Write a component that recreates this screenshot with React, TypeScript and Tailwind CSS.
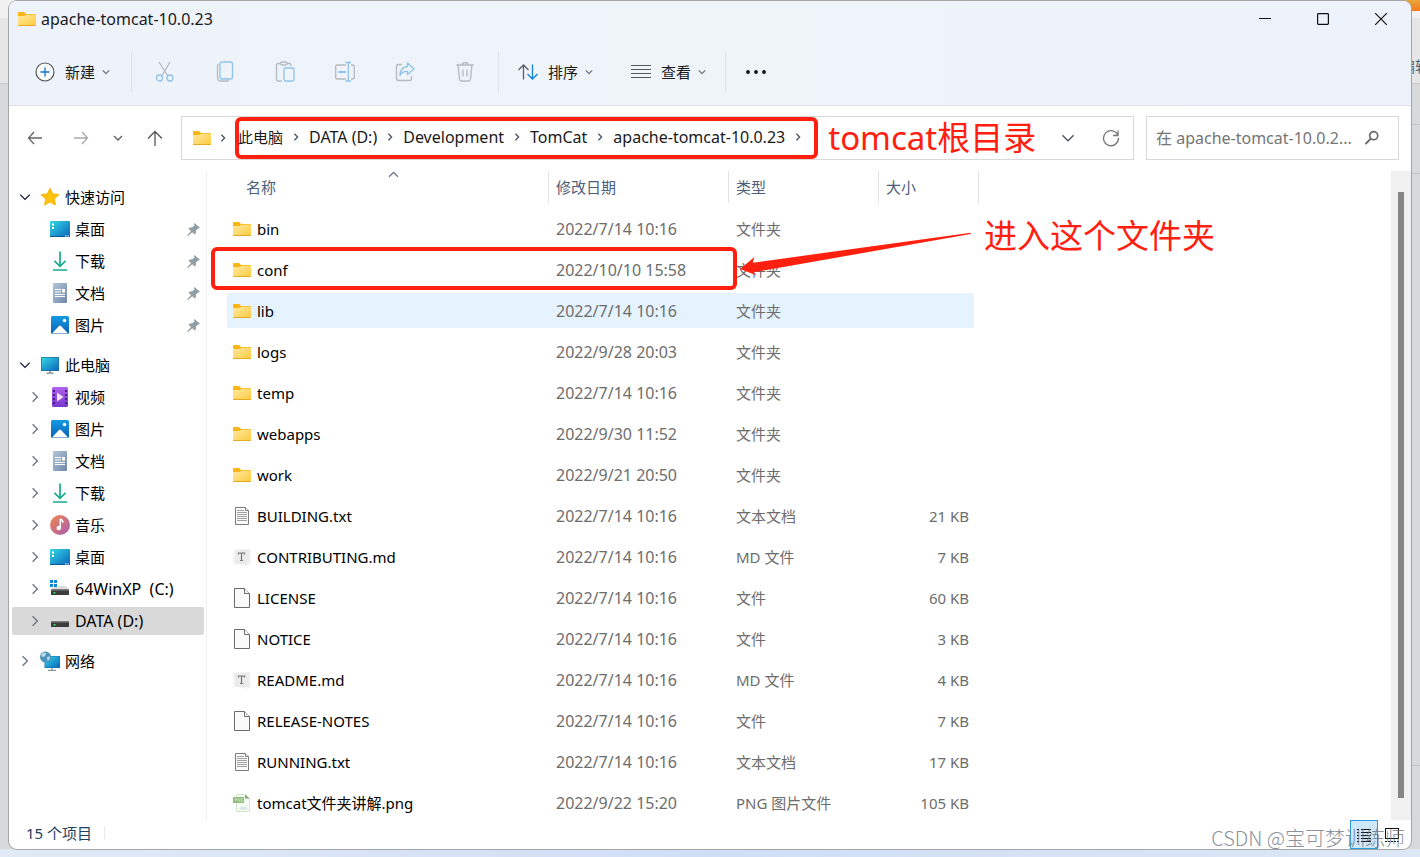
import React from "react";

type IconProps = { className?: string };

/* ---------- ICONS ---------- */

const FolderIcon = ({ className = "" }: IconProps) => (
  <svg width="18" height="14" viewBox="0 0 18 14" className={"shrink-0 " + className}>
    <defs>
      <linearGradient id="folder" x1="0" y1="0" x2="1" y2="1">
        <stop offset="0" stopColor="#ffe9a2" />
        <stop offset="1" stopColor="#ffca3d" />
      </linearGradient>
    </defs>
    <path d="M0 1Q0 0 1 0H5.5Q6.300 0 6.800 .6L8 2H17Q18 2 18 3V8H0Z" fill="#f9b516" />
    <path d="M0 4H6.500L8.300 2.700H18V13Q18 14 17 14H1Q0 14 0 13Z" fill="url(#folder)" />
    <path d="M0 13H18Q18 14 17 14H1Q0 14 0 13Z" fill="#e8a923" />
  </svg>
);

const Chevron = ({ dir, size = 8, className = "" }: { dir: "right" | "down" | "up"; size?: number; className?: string }) => {
  const d = {
    right: "M3 1L7 5L3 9",
    down: "M1 3L5 7L9 3",
    up: "M1 7L5 3L9 7",
  }[dir];
  return (
    <svg width={size} height={size} viewBox="0 0 10 10" fill="none" stroke="currentColor" className={"shrink-0 " + className}>
      <path d={d} strokeWidth={13 / size} />
    </svg>
  );
};

const DesktopIcon = () => (
  <svg width="20" height="16" viewBox="0 0 20 16">
    <defs>
      <linearGradient id="desk" x1="0" y1="0" x2="1" y2="1">
        <stop offset="0" stopColor="#35d6e3" />
        <stop offset="1" stopColor="#0a66bd" />
      </linearGradient>
    </defs>
    <rect width="20" height="16" rx="1" fill="url(#desk)" />
    <rect y="15" width="20" height="1" fill="#0c5a94" />
    <path d="M2 2.500h2v2h-2zM2 6h2v2h-2z" fill="#fff" />
    <path d="M15 15h1.500M17.500 15h1.500" stroke="#fff" />
  </svg>
);

const DownloadIcon = () => (
  <svg width="16" height="20" viewBox="0 0 16 20" fill="none" stroke="#17ab8e" strokeWidth="1.700">
    <path d="M8 0.500V15M2.500 9.800L8 15.300L13.500 9.800M1 19H15" />
  </svg>
);

const DocumentIcon = () => (
  <svg width="14" height="20" viewBox="0 0 14 20">
    <defs>
      <linearGradient id="doc" x1="0" y1="0" x2="1" y2="1">
        <stop offset="0" stopColor="#b3c6d9" />
        <stop offset="1" stopColor="#6e8aa8" />
      </linearGradient>
    </defs>
    <rect width="14" height="20" rx="1" fill="url(#doc)" />
    <path d="M2 6.500h6M2 9h6M2 11.500h10M2 13.500h10" stroke="#fff" />
    <rect x="9" y="6" width="3" height="3.500" fill="#fff" />
  </svg>
);

const PictureIcon = () => (
  <svg width="18" height="18" viewBox="0 0 18 18">
    <defs>
      <linearGradient id="pic" x1="0" y1="0" x2="0" y2="1">
        <stop offset="0" stopColor="#149be6" />
        <stop offset="1" stopColor="#0d62b4" />
      </linearGradient>
    </defs>
    <rect width="18" height="18" rx="1.500" fill="url(#pic)" />
    <path d="M1 17.500L8 10Q9 9 10 10L17 17.500Z" fill="#fff" />
    <circle cx="13.500" cy="4.500" r="1.700" fill="#fff" />
  </svg>
);

const VideoIcon = () => (
  <svg width="16" height="20" viewBox="0 0 16 20">
    <defs>
      <linearGradient id="vid" x1="0" y1="0" x2="0" y2="1">
        <stop offset="0" stopColor="#b060ee" />
        <stop offset="1" stopColor="#7a38cf" />
      </linearGradient>
    </defs>
    <rect width="16" height="20" rx="1.500" fill="url(#vid)" />
    <path d="M2 3V19M14 3V19" stroke="#3b1a78" strokeWidth="1.800" strokeDasharray="2 2" />
    <path d="M5 5.500V14.500L11.500 10Z" fill="#f0e4fb" />
  </svg>
);

const MusicIcon = () => (
  <svg width="20" height="20" viewBox="0 0 20 20">
    <defs>
      <linearGradient id="mus" x1="0" y1="0" x2="1" y2="1">
        <stop offset="0" stopColor="#f1894b" />
        <stop offset="1" stopColor="#a85ab5" />
      </linearGradient>
    </defs>
    <circle cx="10" cy="10" r="10" fill="url(#mus)" />
    <circle cx="8.800" cy="13" r="2.300" fill="#fff" />
    <path d="M10.300 13V4.500H11.500L13.300 7.500" fill="none" stroke="#fff" strokeWidth="1.500" />
  </svg>
);

const MonitorIcon = () => (
  <svg width="18" height="17" viewBox="0 0 18 17">
    <rect width="18" height="14" rx="0.500" fill="#1b6f9c" />
    <rect x="0.700" y="0.700" width="16.600" height="12.600" fill="url(#desk)" />
    <path d="M9 14V16M5.500 16.200H12.500" stroke="#7c8790" strokeWidth="1.300" />
  </svg>
);

const DriveIcon = ({ system = false }: { system?: boolean }) => (
  <svg width="20" height="18" viewBox="0 0 20 18">
    <path d="M4 6H16L19 10H1Z" fill="#dcdcde" />
    <rect x="1" y="9.500" width="18" height="5.500" rx="0.500" fill="#3c3c3c" />
    <rect x="1" y="9.500" width="18" height="1.200" fill="#6a6a6a" />
    <rect x="3.500" y="12" width="2" height="1.500" fill="#39e05b" />
    {system && (
      <>
        <rect width="8" height="7" fill="#fff" />
        <path d="M0 0h3v3h-3zM4 0h3v3h-3zM0 4h3v3h-3zM4 4h3v3h-3z" fill="#0c86d8" />
      </>
    )}
  </svg>
);

const NetworkIcon = () => (
  <svg width="20" height="20" viewBox="0 0 20 20">
    <rect x="4.500" y="5" width="15.500" height="12" fill="#1873ab" />
    <rect x="5" y="5.500" width="14.500" height="11" fill="url(#desk)" />
    <path d="M12 17V19M8 19.300H16" stroke="#8a949b" strokeWidth="1.200" />
    <circle cx="5.500" cy="6" r="5.500" fill="#4f93bd" />
    <path d="M1.500 3Q4 .5 6 2Q6 5 3 6Q1 6 1.500 3ZM7 6L10 5.500Q10 9 7.500 10Z" fill="#b9dcec" />
  </svg>
);

const StarIcon = () => (
  <svg width="20" height="20" viewBox="0 0 20 20">
    <path
      d="M10 1.500L12.500 7L18.500 7.700L14 11.700L15.300 17.700L10 14.700L4.700 17.700L6 11.700L1.500 7.700L7.500 7Z"
      fill="#fdc30c"
      stroke="#fdb90a"
      strokeWidth="1.300"
      strokeLinejoin="round"
    />
  </svg>
);

const PinIcon = () => (
  <svg width="13" height="13" viewBox="0 0 13 13" fill="#939ea6">
    <path d="M7.500 0L13 4.800L11.800 5.600L10.800 5.500L9 7.800L8.800 10.500L7.700 11.500L5.200 9.200L1 13L0 12.500L4 8L1.500 5.800L2.600 4.600L5.300 4.300L7.500 2.300L7 1Z" />
  </svg>
);

const BlankFileIcon = () => (
  <svg width="18" height="20" viewBox="0 0 18 20" fill="#fafafa" stroke="#6b6b6b">
    <path d="M1.500 0.500H11.500L16.500 5.500V19.500H1.500Z" />
    <path d="M11.500 0.500V5.500H16.500" />
  </svg>
);

const TextFileIcon = () => (
  <svg width="18" height="18" viewBox="0 0 18 18" fill="#fafafa" stroke="#7c7c7c">
    <path d="M2.500 0.500H12.500L15.500 3.500V17.500H2.500Z" />
    <path d="M12.500 0.500V3.500H15.500" />
    <path d="M4 3.500H11M4 5.500H14M4 7.500H14M4 9.500H14M4 11.500H14M4 13.500H14" stroke="#a0a0a0" />
  </svg>
);

const MarkdownIcon = () => (
  <svg width="18" height="18" viewBox="0 0 18 18">
    <path d="M1 2L17 1L17.500 15L14 17.500L0.500 15Z" fill="#f6f6f6" stroke="#ececec" strokeWidth="0.500" />
    <rect x="2" y="2" width="14" height="14" fill="#ebebeb" />
    <path d="M5.500 6.500V5H11.500V6.500M8.500 5V12.500M7 12.500H10" fill="none" stroke="#767676" strokeWidth="1.200" />
  </svg>
);

const PngIcon = () => (
  <svg width="18" height="18" viewBox="0 0 18 18">
    <path d="M3.500 0.500H12L16.500 4.500V17.500H3.500Z" fill="#f6fbf4" stroke="#d5e6cd" />
    <path d="M12 0.500V4.500H16.500Z" fill="#79ab68" />
    <path d="M6 15.500L9 11.500L11 13.500L12.500 12L15 15.500Z" fill="#d3e8ee" />
    <rect x="0" y="3" width="11" height="6" fill="#8fbd7f" />
    <path d="M2 7.500V4.500H3.500V6H2M5 7.500V4.500L7 7.500V4.500M10 4.500H8.500V7.500H10V6" fill="none" stroke="#d9ecd2" strokeWidth="0.600" />
  </svg>
);

/* ---------- DATA ---------- */

const quickAccess = [
  { name: "桌面", icon: <DesktopIcon /> },
  { name: "下载", icon: <DownloadIcon /> },
  { name: "文档", icon: <DocumentIcon /> },
  { name: "图片", icon: <PictureIcon /> },
];

const thisPc = [
  { name: "视频", icon: <VideoIcon /> },
  { name: "图片", icon: <PictureIcon /> },
  { name: "文档", icon: <DocumentIcon /> },
  { name: "下载", icon: <DownloadIcon /> },
  { name: "音乐", icon: <MusicIcon /> },
  { name: "桌面", icon: <DesktopIcon /> },
  { name: "64WinXP  (C:)", icon: <DriveIcon system />, drive: true },
  { name: "DATA (D:)", icon: <DriveIcon />, drive: true, selected: true },
];

const crumbs = ["DATA (D:)", "Development", "TomCat", "apache-tomcat-10.0.23"];

const files = [
  { name: "bin", date: "2022/7/14 10:16", type: "文件夹", size: "", icon: <FolderIcon /> },
  { name: "conf", date: "2022/10/10 15:58", type: "文件夹", size: "", icon: <FolderIcon />, marked: true },
  { name: "lib", date: "2022/7/14 10:16", type: "文件夹", size: "", icon: <FolderIcon />, hovered: true },
  { name: "logs", date: "2022/9/28 20:03", type: "文件夹", size: "", icon: <FolderIcon /> },
  { name: "temp", date: "2022/7/14 10:16", type: "文件夹", size: "", icon: <FolderIcon /> },
  { name: "webapps", date: "2022/9/30 11:52", type: "文件夹", size: "", icon: <FolderIcon /> },
  { name: "work", date: "2022/9/21 20:50", type: "文件夹", size: "", icon: <FolderIcon /> },
  { name: "BUILDING.txt", date: "2022/7/14 10:16", type: "文本文档", size: "21 KB", icon: <TextFileIcon /> },
  { name: "CONTRIBUTING.md", date: "2022/7/14 10:16", type: "MD 文件", size: "7 KB", icon: <MarkdownIcon /> },
  { name: "LICENSE", date: "2022/7/14 10:16", type: "文件", size: "60 KB", icon: <BlankFileIcon /> },
  { name: "NOTICE", date: "2022/7/14 10:16", type: "文件", size: "3 KB", icon: <BlankFileIcon /> },
  { name: "README.md", date: "2022/7/14 10:16", type: "MD 文件", size: "4 KB", icon: <MarkdownIcon /> },
  { name: "RELEASE-NOTES", date: "2022/7/14 10:16", type: "文件", size: "7 KB", icon: <BlankFileIcon /> },
  { name: "RUNNING.txt", date: "2022/7/14 10:16", type: "文本文档", size: "17 KB", icon: <TextFileIcon /> },
  { name: "tomcat文件夹讲解.png", date: "2022/9/22 15:20", type: "PNG 图片文件", size: "105 KB", icon: <PngIcon /> },
];

const actions = [
  {
    label: "剪切",
    icon: (
      <>
        <path d="M4 1L12.500 14.500M15 1L7 14.500" stroke="#b5babf" />
        <circle cx="4.500" cy="17" r="3" stroke="#8fc3ea" />
        <circle cx="15" cy="17" r="3" stroke="#8fc3ea" />
      </>
    ),
  },
  {
    label: "复制",
    icon: (
      <>
        <path d="M3.500 3Q2.500 3.500 2.500 5V16Q2.500 20 6 20H12Q13.500 20 14 19" stroke="#b5babf" />
        <rect x="5" y="1" width="12.500" height="17" rx="2" stroke="#8fc3ea" />
      </>
    ),
  },
  {
    label: "粘贴",
    icon: (
      <>
        <path d="M7 20H3Q1.500 20 1.500 18.500V4Q1.500 2.500 3 2.500H5.500M12 2.500H14.500Q16 2.500 16 4V5" stroke="#b5babf" />
        <rect x="5.500" y="1" width="6.500" height="3" rx="1.500" stroke="#b5babf" />
        <rect x="9" y="7" width="10" height="13" rx="1.500" stroke="#8fc3ea" />
      </>
    ),
  },
  {
    label: "重命名",
    icon: (
      <>
        <path d="M11 4H2.500Q.7 4 .7 6V16Q.7 18 2.500 18H11M16 4H17.500Q19.300 4 19.300 6V16Q19.300 18 17.500 18H16" stroke="#b5babf" />
        <path d="M10.500 1.500H16M13.300 1.500V20M10.500 20H16" stroke="#8fc3ea" />
        <path d="M3.500 11H11" stroke="#8fc3ea" strokeWidth="2" />
      </>
    ),
  },
  {
    label: "共享",
    icon: (
      <>
        <path d="M7 3.500H3.500Q1.500 3.500 1.500 5.500V17.500Q1.500 19.500 3.500 19.500H14.500Q16.500 19.500 16.500 17.500V15" stroke="#b5babf" />
        <path d="M12.500 2L19 8L12.500 13.500V10.500Q7.500 10 5 14.500Q5 6.500 12.500 5.500Z" stroke="#8fc3ea" strokeLinejoin="round" />
      </>
    ),
  },
  {
    label: "删除",
    icon: (
      <>
        <path d="M1.500 4H18.500M7 4Q7 1.500 10 1.500Q13 1.500 13 4M3 4L4.500 18Q4.700 20 6.500 20H13.500Q15.300 20 15.500 18L17 4M8 8.500V15.500M12 8.500V15.500" stroke="#b5babf" />
      </>
    ),
  },
];

/* ---------- PARTS ---------- */

const Divider = () => <span className="h-10 w-px bg-[#dde2e6]"></span>;

const MenuButton = ({ label, children }: { label: string; children: React.ReactNode }) => (
  <button className="flex items-center px-[19px] h-10 text-[#1b1b1b]">
    {children}
    <span className="ml-[10px] mr-[7px]">{label}</span>
    <Chevron dir="down" className="text-gray-500" />
  </button>
);

const Header = () => (
  <header className="border-b border-[#d9dfe5] bg-linear-to-r from-[#eef3fb] via-[#eef4f8] to-[#eef2fb]">
    <div className="flex items-center h-[37px] pb-[2px] pl-[9px]">
      <FolderIcon />
      <h1 className="ml-[5px] flex-1 text-base leading-5 text-[#1a1a1a]">apache-tomcat-10.0.23</h1>
      <button aria-label="最小化" className="flex justify-center w-[58px]">
        <svg width="12" height="12" viewBox="0 0 12 12" stroke="#111"><path d="M0 5.500H12" /></svg>
      </button>
      <button aria-label="最大化" className="flex justify-center w-[58px]">
        <svg width="12" height="12" viewBox="0 0 12 12" stroke="#111" fill="none" strokeWidth="1.200"><rect x="0.600" y="0.600" width="10.800" height="10.800" rx="0.800" /></svg>
      </button>
      <button aria-label="关闭" className="flex justify-center w-[58px] mr-px">
        <svg width="12" height="12" viewBox="0 0 12 12" stroke="#111" strokeWidth="1.200"><path d="M0 0L12 12M12 0L0 12" /></svg>
      </button>
    </div>

    <div className="flex items-center h-[67px] pl-[7px]">
      <div className="mr-[2px]">
        <MenuButton label="新建">
          <svg width="20" height="20" viewBox="0 0 20 20" fill="none">
            <circle cx="10" cy="10" r="9" stroke="#555" strokeWidth="1.200" fill="#f8fafc" />
            <path d="M10 5.500V14.500M5.500 10H14.500" stroke="#1176c4" strokeWidth="1.300" />
          </svg>
        </MenuButton>
      </div>
      <Divider />
      <div className="flex px-[3px]">
        {actions.map((action) => (
          <button key={action.label} aria-label={action.label} className="flex justify-center w-[60px]">
            <svg width="20" height="21" viewBox="0 0 20 21" fill="none" strokeWidth="1.300">{action.icon}</svg>
          </button>
        ))}
      </div>
      <Divider />
      <MenuButton label="排序">
        <svg width="20" height="16" viewBox="0 0 20 16" fill="none" strokeWidth="1.300">
          <path d="M5.500 15.500V1M0.500 6L5.500 1L10.500 6" stroke="#5b5f63" />
          <path d="M14.500 0.500V15M9.500 10L14.500 15L19.500 10" stroke="#1180dc" />
        </svg>
      </MenuButton>
      <MenuButton label="查看">
        <svg width="20" height="14" viewBox="0 0 20 14" stroke="#55595d">
          <path d="M0 0.500H20M0 4.500H20M0 8.500H20M0 12.500H20" />
        </svg>
      </MenuButton>
      <Divider />
      <button aria-label="更多" className="px-5">
        <svg width="20" height="4" viewBox="0 0 20 4" fill="#111">
          <circle cx="2" cy="2" r="1.900" /><circle cx="10" cy="2" r="1.900" /><circle cx="18" cy="2" r="1.900" />
        </svg>
      </button>
    </div>
  </header>
);

const CrumbArrow = () => (
  <span className="flex justify-center w-[26px] text-gray-600"><Chevron dir="right" /></span>
);

const AddressBar = () => (
  <div className="flex items-center pt-[10px] pb-[11px] pr-3 pl-[18px]">
    <div className="flex items-center mr-[18px] text-[#5c5c5c]">
      <button aria-label="后退" className="w-4">
        <svg width="16" height="14" viewBox="0 0 16 14" fill="none" stroke="#666" strokeWidth="1.300"><path d="M15 7H1.500M7 1L1.500 7L7 13" /></svg>
      </button>
      <button aria-label="前进" className="ml-[30px] w-4">
        <svg width="16" height="14" viewBox="0 0 16 14" fill="none" stroke="#aaa" strokeWidth="1.300"><path d="M1 7H14.500M9 1L14.500 7L9 13" /></svg>
      </button>
      <button aria-label="最近位置" className="ml-6 w-[10px]"><Chevron dir="down" size={10} /></button>
      <button aria-label="上移" className="ml-6 w-4">
        <svg width="16" height="16" viewBox="0 0 16 16" fill="none" stroke="#555" strokeWidth="1.300"><path d="M8 16V1.500M1 8.500L8 1.500L15 8.500" /></svg>
      </button>
    </div>

    <div className="flex flex-1 items-center h-11 border border-[#d9d9d9] pl-[11px]">
      <FolderIcon />
      <Chevron dir="right" className="ml-2 mr-[11px] text-gray-600" />
      <nav className="relative flex items-center h-full pb-[2px] text-[#1a1a1a]">
        <button className="whitespace-nowrap">此电脑</button>
        <CrumbArrow />
        {crumbs.map((crumb) => (
          <React.Fragment key={crumb}>
            <button className="whitespace-nowrap text-base leading-5">{crumb}</button>
            <CrumbArrow />
          </React.Fragment>
        ))}
        <span className="absolute top-0 bottom-0 -left-[3px] -right-[7px] border-4 border-[#ff2010] rounded-md"></span>
      </nav>
      <span className="ml-[17px] flex-1 whitespace-nowrap text-[33px] leading-10 text-[#ff2010]">tomcat根目录</span>
      <button aria-label="展开" className="text-gray-600"><Chevron dir="down" size={14} /></button>
      <button aria-label="刷新" className="ml-[27px] mr-[13px]">
        <svg width="18" height="18" viewBox="0 0 18 18" fill="none" stroke="#777" strokeWidth="1.300">
          <path d="M16 6.500A7.500 7.500 0 1 0 16.500 9M16 1.500V6.500H11" />
        </svg>
      </button>
    </div>

    <label className="flex items-center ml-3 w-[253px] h-11 border border-[#d9d9d9] pl-[9px] pr-[18px]">
      <input
        type="text"
        aria-label="搜索"
        placeholder="在 apache-tomcat-10.0.2..."
        className="min-w-0 flex-1 text-base leading-5 outline-none placeholder:text-[#757575]"
      />
      <svg width="16" height="16" viewBox="0 0 16 16" fill="none" stroke="#6b6b6b" className="ml-2">
        <circle cx="9.700" cy="5.700" r="4" strokeWidth="1.700" />
        <path d="M6.800 8.600L1.500 14" strokeWidth="2" />
      </svg>
    </label>
  </div>
);

type NavRowProps = {
  name: string;
  icon: React.ReactNode;
  nested?: boolean;
  arrow?: "right" | "down";
  pinned?: boolean;
  drive?: boolean;
  selected?: boolean;
};

const NavRow = ({ name, icon, nested, arrow, pinned, drive, selected }: NavRowProps) => (
  <button
    className={
      "flex items-center w-full h-7 pr-1 rounded-xs text-black whitespace-pre " +
      (nested ? "pl-[13px] " : "pl-[3px] ") +
      (drive ? "text-base leading-5 " : "") +
      (selected ? "bg-[#d9d9d9]" : "")
    }
  >
    <span className="flex justify-center w-5">
      {arrow && <Chevron dir={arrow} size={12} className={arrow === "down" ? "text-gray-900" : "text-gray-500"} />}
    </span>
    <span className="flex justify-center items-center w-5 mx-[5px]">{icon}</span>
    <span className="flex-1 text-left">{name}</span>
    {pinned && <PinIcon />}
  </button>
);

const Sidebar = () => (
  <aside className="flex flex-col w-[198px] shrink-0 gap-1 pt-3 pl-[3px] pr-[2px] border-r border-[#f0f0f0]">
    <NavRow name="快速访问" icon={<StarIcon />} arrow="down" />
    {quickAccess.map((item) => (
      <NavRow key={item.name} nested pinned {...item} />
    ))}
    <div className="mt-2">
      <NavRow name="此电脑" icon={<MonitorIcon />} arrow="down" />
    </div>
    {thisPc.map((item) => (
      <NavRow key={item.name} nested arrow="right" {...item} />
    ))}
    <div className="mt-2">
      <NavRow name="网络" icon={<NetworkIcon />} arrow="right" />
    </div>
  </aside>
);

const FileTable = () => (
  <div className="relative -my-[6px] ml-5 w-[752px]">
    <table className="w-full table-fixed border-separate border-spacing-x-0 border-spacing-y-[6px] text-left">
      <colgroup>
        <col className="w-[322px]" />
        <col className="w-[180px]" />
        <col className="w-[150px]" />
        <col className="w-[95px]" />
        <col className="w-[5px]" />
      </colgroup>
      <thead className="text-[#4c607a]">
        <tr>
          <th className="p-0 h-[34px] align-top font-normal">
            <button className="relative flex items-center w-full h-8 pl-[19px] border-r border-[#e2e2e2]">
              名称
              <Chevron dir="up" size={11} className="absolute -top-[2px] left-[161px] text-gray-500" />
            </button>
          </th>
          <th className="p-0 align-top font-normal">
            <button className="flex items-center w-full h-8 pl-[7px] border-r border-[#e2e2e2]">修改日期</button>
          </th>
          <th className="p-0 align-top font-normal">
            <button className="flex items-center w-full h-8 pl-[7px] border-r border-[#e2e2e2]">类型</button>
          </th>
          <th className="p-0 align-top font-normal">
            <button className="flex items-center w-full h-8 pl-[7px]">大小</button>
          </th>
          <th className="p-0 align-top"><div className="h-8 border-r border-[#e2e2e2]"></div></th>
        </tr>
      </thead>
      <tbody className="text-[#6d6d6d]">
        {files.map((file) => {
          const bg = file.hovered ? "bg-[#e5f3ff] " : "";
          return (
            <tr key={file.name}>
              <td className={bg + "relative p-0 pl-[6px] h-[35px] rounded-l-xs"}>
                <div className="flex items-center gap-[6px] text-black">
                  <span className="flex w-[18px] h-5 items-center">{file.icon}</span>
                  <span className="whitespace-nowrap">{file.name}</span>
                </div>
                {file.marked && (
                  <span className="absolute -top-[5px] -left-4 w-[526px] h-[43px] border-4 border-[#ff2010] rounded-md"></span>
                )}
              </td>
              <td className={bg + "p-0 pl-[7px] text-base leading-5 whitespace-nowrap"}>{file.date}</td>
              <td className={bg + "p-0 pl-[7px] whitespace-nowrap"}>{file.type}</td>
              <td className={bg + "p-0 pr-[5px] text-right whitespace-nowrap rounded-r-xs"}>{file.size}</td>
              <td className="p-0"></td>
            </tr>
          );
        })}
      </tbody>
    </table>

    {/* hint arrow and note next to the conf folder */}
    <svg width="234" height="46" viewBox="738 232 234 46" className="absolute top-[67px] left-[511px]">
      <path d="M740 269L754.500 257L752.700 262.700L970.700 232.700V234L753.300 272.300L757 275.500Z" fill="#ff2010" />
    </svg>
    <p className="absolute top-[51px] left-[757px] whitespace-nowrap text-[33px] leading-10 text-[#ff2010]">
      进入这个文件夹
    </p>
  </div>
);

const StatusBar = () => (
  <footer className="flex items-stretch h-[29px] pl-[17px] pr-[5px] text-[#24405f]">
    <span className="self-center mb-1">15 个项目</span>
    <span className="self-center mb-1 ml-3 w-px h-3 bg-gray-200"></span>
    <span className="flex-1"></span>
    <button aria-label="详细信息" className="flex items-center justify-center w-7 border border-[#2a9ad8] bg-[#cce8f9]">
      <svg width="14" height="14" viewBox="0 0 14 14" stroke="#111">
        <path d="M0 1.500H2M4 1.500H14M0 4.500H2M4 4.500H14M0 7.500H2M4 7.500H14M0 10.500H2M4 10.500H14M0 13.500H2M4 13.500H14" />
      </svg>
    </button>
    <button aria-label="大图标" className="flex items-center justify-center w-7">
      <svg width="14" height="14" viewBox="0 0 14 14" stroke="#111" fill="none">
        <rect x="0.500" y="0.500" width="13" height="10" /><path d="M0 13.500H14" strokeDasharray="2 1" />
      </svg>
    </button>
  </footer>
);

/* slices of the page that shows around the window */
const Backdrop = () => (
  <div className="absolute inset-0 overflow-hidden">
    <div className="h-[18px] bg-[#f1f1f1]"></div>
    <div className="h-[66px] border-b border-[#cbcbcb] bg-[#e6e6e7]"></div>
    <div className="absolute top-0 right-0 w-[503px] h-px bg-[#c9513c]"></div>
    <div className="absolute top-0 right-0 w-6 h-[11px] bg-linear-to-b from-[#eaa63c] to-[#f07a1c]"></div>
    <div className="absolute top-[124px] right-0 w-3 h-[50px] border-y border-[#c4c5c7]"></div>
    <div className="absolute top-[765px] right-0 w-3 h-px bg-[#c4c5c7]"></div>
    <span className="absolute top-[56px] -right-[10px] whitespace-nowrap text-[#4b6377]">编辑</span>
    <div className="absolute bottom-0 inset-x-0 h-2 bg-linear-to-r from-[#e1eaf6] via-[#d0def5] to-[#dce8f6]"></div>
  </div>
);

const App = () => {
  return (
    <div className="relative flex flex-col min-h-screen px-[9px] pt-px pb-2 bg-[#d8d9db] font-['Noto_Sans','Noto_Sans_CJK_SC',sans-serif] text-[15px] leading-5">
      <Backdrop />

      <main className="relative flex flex-1 flex-col overflow-hidden rounded-lg bg-white shadow-[0_0_0_1px_#a5a5a5]">
        <Header />
        <AddressBar />
        <div className="flex flex-1">
          <Sidebar />
          <FileTable />
          <div className="ml-auto flex w-5 justify-center bg-[#f0f0f0] pt-[21px] pb-[22px]">
            <div className="w-[6px] bg-[#868686]"></div>
          </div>
        </div>
        <StatusBar />
      </main>

      <span className="absolute right-[15px] bottom-[7px] whitespace-nowrap font-['Noto_Sans_CJK_SC',sans-serif] font-light text-xl leading-6 text-gray-500/80">
        CSDN @宝可梦训练师
      </span>
    </div>
  );
};

export default App;
